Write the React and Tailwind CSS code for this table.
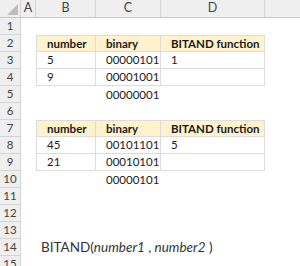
import React from "react";

const font = { fontFamily: "Lato, 'Noto Sans', sans-serif" };

function RowHead({ n }) {
  return (
    <div className="w-[21px] shrink-0 h-full bg-[#efefef] border-r border-b border-[#d4d4d4] flex items-center justify-center text-[11.5px] text-[#444] box-border">
      {n}
    </div>
  );
}

function Cell({ w, children, kind, bold }) {
  let cls = "shrink-0 h-full box-border flex items-center pl-[10px] text-[11.5px] text-[#1a1a1a] ";
  if (kind === "head") cls += "bg-[#fff2cc] border-r border-b border-t border-[#dcdcdc] ";
  else if (kind === "body") cls += "bg-white border-r border-b border-[#dcdcdc] ";
  if (bold) cls += "font-bold ";
  return (
    <div className={cls} style={{ width: w }}>
      {children}
    </div>
  );
}

function Row({ n, b, c, d, kind }) {
  const k = kind || "none";
  return (
    <div className="flex h-[17px]">
      <RowHead n={n} />
      <div className="w-[15px] shrink-0 h-full" />
      <div className={k !== "none" ? "flex h-full border-l border-[#dcdcdc]" : "flex h-full"}>
        <Cell w={k !== "none" ? 59 : 60} kind={k} bold={k === "head"}>{b}</Cell>
        <Cell w={65} kind={k} bold={k === "head"}>{c}</Cell>
        <Cell w={104} kind={k} bold={k === "head"}>{d}</Cell>
      </div>
    </div>
  );
}

export default function App() {
  return (
    <div className="w-[300px] h-[266px] overflow-hidden bg-white" style={font}>
      <div className="flex h-[18px] bg-[#efefef] border-b border-[#c8c8c8] box-border text-[12.5px] text-[#444]">
        <div className="w-[21px] shrink-0 h-full border-r border-[#d4d4d4] relative box-border">
          <svg className="absolute right-[2px] bottom-[2px]" width="11" height="11" viewBox="0 0 11 11">
            <polygon points="11,0 11,11 0,11" fill="#bdbdbd" />
          </svg>
        </div>
        <div className="w-[15px] shrink-0 h-full border-r border-[#d4d4d4] flex items-center justify-center box-border">A</div>
        <div className="w-[60px] shrink-0 h-full border-r border-[#d4d4d4] flex items-center justify-center box-border">B</div>
        <div className="w-[65px] shrink-0 h-full border-r border-[#d4d4d4] flex items-center justify-center box-border">C</div>
        <div className="w-[104px] shrink-0 h-full border-r border-[#d4d4d4] flex items-center justify-center box-border">D</div>
        <div className="flex-1 h-full" />
      </div>
      <Row n={1} />
      <Row n={2} kind="head" b="number" c="binary" d="BITAND function" />
      <Row n={3} kind="body" b="5" c="00000101" d="1" />
      <Row n={4} kind="body" b="9" c="00001001" />
      <Row n={5} c="00000001" />
      <Row n={6} />
      <Row n={7} kind="head" b="number" c="binary" d="BITAND function" />
      <Row n={8} kind="body" b="45" c="00101101" d="5" />
      <Row n={9} kind="body" b="21" c="00010101" />
      <Row n={10} c="00000101" />
      <Row n={11} />
      <Row n={12} />
      <Row n={13} />
      <div className="flex h-[17px]">
        <RowHead n={14} />
        <div className="pl-[20px] flex items-center text-[13.5px] text-[#333] whitespace-nowrap">
          BITAND(<span className="italic">number1</span>&nbsp;, <span className="italic">&nbsp;number2</span>&nbsp;)
        </div>
      </div>
      <div className="flex h-[17px]">
        <RowHead n={15} />
      </div>
    </div>
  );
}
